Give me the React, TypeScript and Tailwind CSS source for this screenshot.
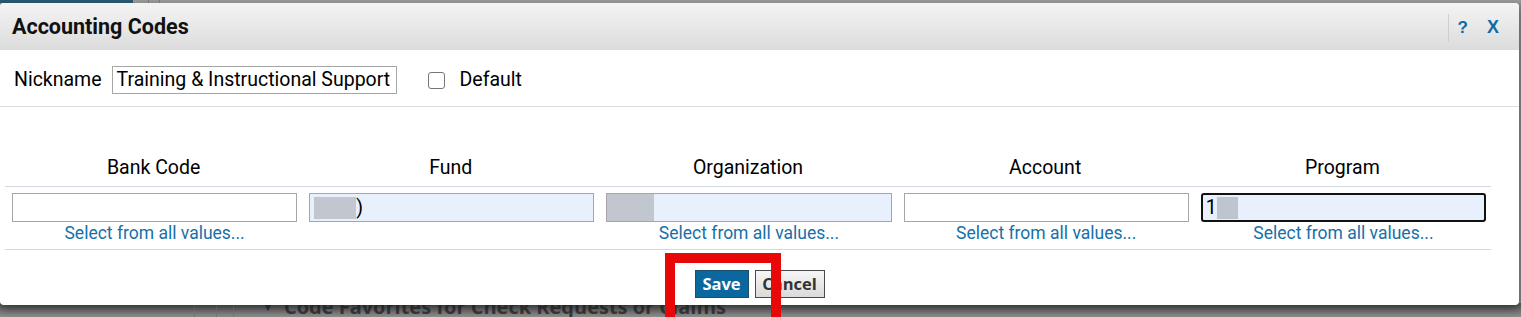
const columns = [
  { label: "Bank Code", value: "", filled: false, link: true },
  { label: "Fund", value: ")", filled: true, link: false, blur: "w-[42px] ml-[4px]" },
  { label: "Organization", value: "", filled: true, link: true, blur: "w-[47px] ml-0" },
  { label: "Account", value: "", filled: false, link: true },
  { label: "Program", value: "1", filled: true, link: true, blur: "w-[21px] ml-0", focus: true },
];

type Col = (typeof columns)[number] & { blur?: string; focus?: boolean };

const CodeInput = ({ col }: { col: Col }) => {
  const base = "flex h-[29px] w-full items-center overflow-hidden text-[19.5px] text-black";
  if (col.focus) {
    return (
      <div className={`${base} rounded-[3px] border-2 border-[#111] bg-[#e8f0fe] pl-[3px]`}>
        <span>{col.value}</span>
        <span className={`h-[22px] bg-[#bfc5cf] ${col.blur}`} />
      </div>
    );
  }
  return (
    <div className={`${base} border border-[#a6a6a6] ${col.filled ? "bg-[#e8f0fe]" : "bg-white"}`}>
      {col.blur && !col.value && <span className={`h-full bg-[#c1c6cf] ${col.blur}`} />}
      {col.blur && col.value && (
        <>
          <span className={`h-[22px] bg-[#c1c6cf] ${col.blur}`} />
          <span>{col.value}</span>
        </>
      )}
    </div>
  );
};

export default function App() {
  return (
    <div className="relative h-[317px] w-[1521px] overflow-hidden bg-[#8d8d8d] font-['Roboto',sans-serif]">
      {/* page behind the modal */}
      <div className="flex h-full flex-col">
        <div className="flex h-[3px] bg-[#9a9a9a]">
          <div className="w-[133px] bg-[#2c5a6e]" />
          <div className="w-[15px]" />
          <div className="w-px bg-[#7f7f7f]" />
          <div className="w-[10px]" />
          <div className="w-px bg-[#7f7f7f]" />
        </div>
        <div className="flex-1" />
        <div className="flex h-[14px] items-start bg-gradient-to-b from-[#5a5a5a] to-[#8e8e8e]">
          <div className="w-[194px]" />
          <div className="h-full w-px bg-[#7a7a7a]" />
          <div className="w-[21px]" />
          <div className="h-full w-px bg-[#7a7a7a]" />
          <div className="w-[16px]" />
          <div className="h-full w-px bg-[#7a7a7a]" />
          <div className="-mt-[8px] flex items-center gap-[10px] pl-[28px] font-['Open_Sans',sans-serif] text-[20px] font-bold leading-[24px] text-[#3a3a3a]">
            <span className="text-[12px]">▼</span>
            <span>Code Favorites for Check Requests or Claims</span>
          </div>
        </div>
      </div>

      {/* modal */}
      <div className="absolute left-0 top-[3px] flex h-[302px] w-[1519px] flex-col overflow-hidden rounded-[4px] bg-white shadow-[0_4px_8px_rgba(0,0,0,0.45)]">
        <div className="flex h-[47px] items-center bg-gradient-to-b from-[#f4f4f4] to-[#dcdcdc] pl-[12px] pr-[20px] pt-[2px]">
          <h1 className="text-[21.5px] font-bold text-[#111]">Accounting Codes</h1>
          <div className="ml-auto flex h-[28px] items-center">
            <div className="h-full w-px bg-[#cfcfcf]" />
            <span className="ml-[9px] font-['Liberation_Sans',sans-serif] text-[17px] font-bold text-[#0f6aa6]">?</span>
            <span className="ml-[19px] font-['Liberation_Sans',sans-serif] text-[18px] font-bold text-[#0f6aa6]">X</span>
          </div>
        </div>

        <div className="flex h-[57px] items-center border-b border-[#dedede] pl-[14px] pt-[4px]">
          <span className="text-[19.5px] text-black">Nickname</span>
          <div className="ml-[10px] flex h-[28px] w-[285px] items-center border border-[#a6a6a6] pl-[4px] text-[19.5px] text-black">
            Training &amp; Instructional Support
          </div>
          <div className="ml-[31px] h-[17px] w-[17px] rounded-[3px] border border-[#767676] bg-white" />
          <span className="ml-[15px] text-[19.5px] text-black">Default</span>
        </div>

        <div className="ml-[5px] mt-[44px] w-[1486px]">
          <div className="grid h-[36px] grid-cols-5 items-center border-b border-[#d3d9e2] pb-[1px]">
            {columns.map((c) => (
              <div key={c.label} className="text-center text-[19.5px] text-black">
                {c.label}
              </div>
            ))}
          </div>
          <div className="grid h-[63px] grid-cols-5 border-b border-[#d3d9e2]">
            {columns.map((c) => (
              <div key={c.label} className="flex flex-col items-center pl-[7px] pr-[5px] pt-[6px]">
                <CodeInput col={c as Col} />
                {c.link && (
                  <span className="mt-[1px] text-[17.5px] leading-[21px] text-[#1670a9]">Select from all values...</span>
                )}
              </div>
            ))}
          </div>
        </div>

        <div className="mt-[20px] flex justify-center gap-[6px] font-['Open_Sans',sans-serif]">
          <button className="h-[28px] w-[54px] border border-[#1b4f72] bg-[#0b689f] text-[16.5px] font-bold text-white">
            Save
          </button>
          <button className="h-[28px] w-[70px] border border-[#4a4a4a] bg-gradient-to-b from-[#f6f6f6] to-[#dadada] text-[16.5px] font-bold text-[#333]">
            Cancel
          </button>
        </div>
      </div>

      {/* highlight box */}
      <div className="absolute left-[665px] top-[253px] h-[75px] w-[116px] border-[10px] border-[#e80808]" />
    </div>
  );
}
